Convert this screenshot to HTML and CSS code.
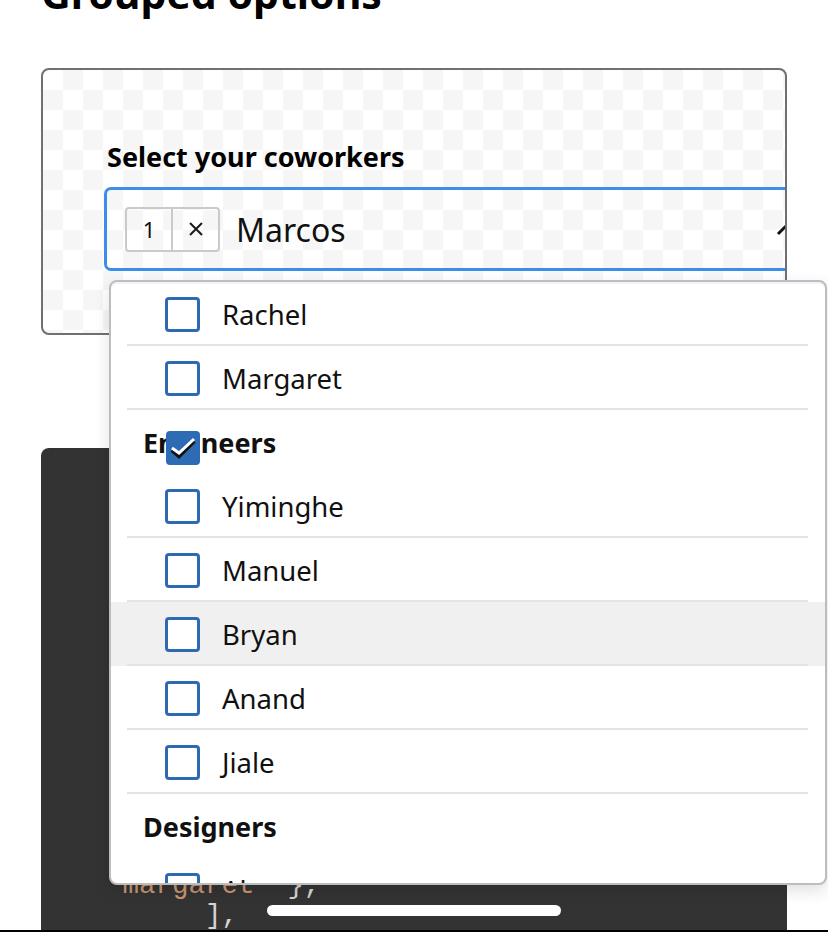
FILE: index.html
```html
<!DOCTYPE html>
<html lang="en">
<head>
    <meta charset="UTF-8">
    <meta name="viewport" content="width=device-width, initial-scale=1.0">
    <title>Grouped options</title>
    <link rel="stylesheet" href="styles.css">
</head>
<body>
    <div class="page">
        <h2 class="title">Grouped options</h2>

        <!-- Demo area with the select -->
        <div class="demo">
            <label class="field-label">Select your coworkers</label>
            <div class="select">
                <span class="tag">
                    <span class="tag-count">1</span>
                    <span class="tag-remove">
                        <svg width="16" height="16" viewBox="0 0 16 16"><path d="M2 2 L14 14 M14 2 L2 14" stroke="#1a1a1a" stroke-width="2" fill="none"/></svg>
                    </span>
                </span>
                <span class="select-value">Marcos</span>
                <svg class="chevron" width="24" height="14" viewBox="0 0 24 14"><path d="M2 12 L12 2 L22 12" stroke="#111" stroke-width="3" fill="none"/></svg>
            </div>
        </div>

        <!-- Source of the demo -->
<pre class="code"><span class="p">   </span><span class="k">const</span> groupedOptions <span class="p">= [</span>
<span class="p">     {</span>
       label<span class="p">:</span> <span class="s">'Engineers'</span><span class="p">,</span>
       options<span class="p">: [</span>
<span class="p">         {</span> label<span class="p">:</span> <span class="s">'Yiminghe'</span><span class="p">,</span>
           value<span class="p">:</span> <span class="s">'yiminghe'</span> <span class="p">},</span>
<span class="p">         {</span> label<span class="p">:</span> <span class="s">'Manuel'</span><span class="p">,</span>
           value<span class="p">:</span> <span class="s">'manuel'</span> <span class="p">},</span>
<span class="p">       ],</span>
<span class="p">     },</span>
<span class="p">     {</span>
       label<span class="p">:</span> <span class="s">'Managers'</span><span class="p">,</span>
       options<span class="p">: [ {</span> label<span class="p">:</span> <span class="s">'Margaret'</span><span class="p">,</span> value<span class="p">:</span>
  <span class="s">'margaret'</span> <span class="p">},</span>
<span class="p">        ],</span>
<span class="p">     },</span>
<span class="p">   ];</span></pre>
    </div>

    <!-- Open dropdown of the select -->
    <div class="menu">
        <div class="option"><span class="checkbox"></span>Rachel</div>
        <div class="option"><span class="checkbox"></span>Margaret</div>
        <div class="group">
            Engineers
            <span class="checkbox checked">
                <svg width="34" height="34" viewBox="0 0 34 34">
                    <path d="M6 19 L13 25 L28 10" stroke="#111" stroke-width="4.5" fill="none"/>
                    <path d="M6 17 L13 22 L28 8" stroke="#fff" stroke-width="3" fill="none"/>
                </svg>
            </span>
        </div>
        <div class="option"><span class="checkbox"></span>Yiminghe</div>
        <div class="option"><span class="checkbox"></span>Manuel</div>
        <div class="option active"><span class="checkbox"></span>Bryan</div>
        <div class="option"><span class="checkbox"></span>Anand</div>
        <div class="option"><span class="checkbox"></span>Jiale</div>
        <div class="group">Designers</div>
        <div class="option"><span class="checkbox"></span>Alex</div>
    </div>

    <div class="home-bar"></div>
    <div class="screen-edge"></div>
</body>
</html>
```

FILE: styles.css
```css
html, body {
    height: 100%;
    overflow: hidden;
}

body {
    margin: 0;
    background: #fff;
    color: #111;
    font-family: 'Noto Sans', 'Open Sans', sans-serif;
}

.page {
    padding-left: 41px;
    width: 746px;
}

.title {
    margin: -32px 0 0;
    font-size: 41px;
    line-height: 50px;
    font-weight: 700;
    color: #000;
}

/* demo box with the checkered backdrop */
.demo {
    margin-top: 50px;
    height: 267px;
    box-sizing: border-box;
    padding: 66px 0 0 61px;
    border: 2px solid #707070;
    border-radius: 8px;
    overflow: hidden;
    background: repeating-conic-gradient(#f6f6f6 0 25%, #fff 0 50%) 0 0 / 40px 40px;
}

.field-label {
    display: block;
    margin-left: 3px;
    font-size: 27px;
    line-height: 42px;
    font-weight: 700;
    color: #000;
}

.select {
    margin-top: 9px;
    width: 720px;
    height: 84px;
    box-sizing: border-box;
    padding: 0 21px 0 18px;
    border: 3px solid #3d8eea;
    border-radius: 7px;
    display: flex;
    align-items: center;
}

.tag {
    display: flex;
    height: 45px;
    box-sizing: border-box;
    border: 2px solid #cacaca;
    border-radius: 4px;
}

.tag-count, .tag-remove {
    display: flex;
    align-items: center;
    justify-content: center;
    width: 44px;
    font-size: 22px;
}

.tag-remove {
    width: 45px;
    border-left: 2px solid #cacaca;
}

.select-value {
    margin-left: 16px;
    font-size: 32px;
}

.chevron {
    margin-left: auto;
}

/* code sample */
.code {
    margin: 113px 0 0;
    height: 700px;
    box-sizing: border-box;
    padding: 33px 32px;
    background: #333;
    border-radius: 8px 8px 0 0;
    font-family: 'Liberation Mono', monospace;
    font-size: 27.5px;
    line-height: 30px;
    color: #9cdcfe;
}

.code .p { color: #d4d4d4; }
.code .k { color: #569cd6; }
.code .s { color: #c99371; }

/* dropdown */
.menu {
    position: absolute;
    left: 109px;
    top: 280px;
    width: 718px;
    height: 605px;
    box-sizing: border-box;
    border: 2px solid #bdbdbd;
    border-radius: 8px;
    background: #fff;
    overflow: hidden;
    box-shadow: 0 6px 16px rgba(0, 0, 0, 0.12), inset 0 2px 0 #eef4fc;
}

.option, .group {
    position: relative;
    height: 64px;
    display: flex;
    align-items: center;
    font-size: 27.5px;
}

.option {
    padding-left: 54px;
    gap: 22px;
}

.option::after {
    content: "";
    position: absolute;
    left: 16px;
    right: 17px;
    bottom: 0;
    height: 2px;
    background: #e4e4e4;
}

.option.active {
    background: #f0f0f0;
}

.group {
    padding-left: 32px;
    font-size: 27px;
    font-weight: 700;
}

.checkbox {
    width: 35px;
    height: 35px;
    box-sizing: border-box;
    border: 3px solid #2e69b3;
    border-radius: 4px;
    background: #fff;
    flex: none;
}

.checkbox.checked {
    position: absolute;
    left: 55px;
    top: 21px;
    width: 34px;
    height: 34px;
    border: none;
    background: #2e6bb5;
}

.checkbox.checked svg {
    display: block;
}

.home-bar {
    position: fixed;
    left: 267px;
    top: 905px;
    width: 294px;
    height: 11px;
    border-radius: 6px;
    background: #fff;
}

.screen-edge {
    position: fixed;
    left: 0;
    right: 0;
    bottom: 0;
    height: 2px;
    background: #000;
}
```
